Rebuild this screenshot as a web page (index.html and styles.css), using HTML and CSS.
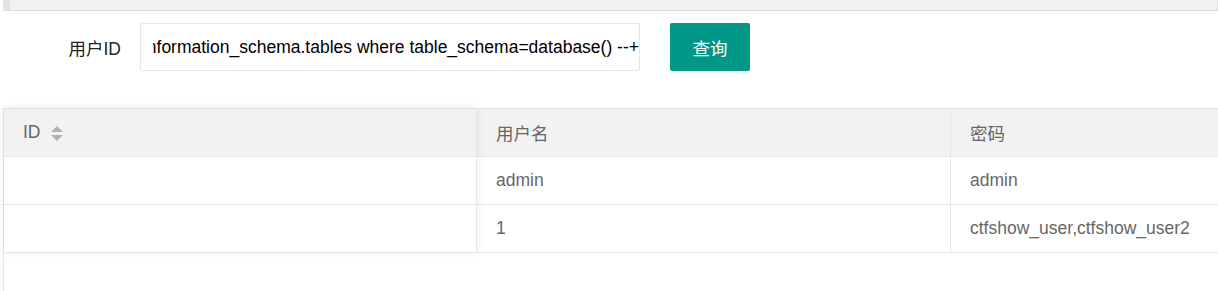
FILE: index.html
```html
<!DOCTYPE html>
<html lang="zh-CN">
<head>
<meta charset="UTF-8">
<meta name="viewport" content="width=device-width, initial-scale=1.0">
<title>ctfshow</title>
<link rel="stylesheet" href="styles.css">
</head>
<body>

<div class="page">
  <div class="quote"></div>

  <form class="search">
    <label class="search-label">用户ID</label>
    <div class="search-input">
      <div class="search-value"><span>1' union select 1,group_concat(table_name) from information_schema.tables where table_schema=database() --+</span></div>
    </div>
    <button type="button" class="search-button">查询</button>
  </form>

  <div class="table-view">
    <table class="table">
      <thead>
        <tr>
          <th class="col-id"></th>
          <th class="col-name">用户名</th>
          <th class="col-pass">密码</th>
        </tr>
      </thead>
      <tbody>
        <tr>
          <td></td>
          <td>admin</td>
          <td>admin</td>
        </tr>
        <tr>
          <td></td>
          <td>1</td>
          <td>ctfshow_user,ctfshow_user2</td>
        </tr>
      </tbody>
    </table>

    <!-- fixed left column, drawn over the main table -->
    <div class="table-fixed">
      <table class="table">
        <thead>
          <tr><th class="col-id"><span>ID</span><span class="sort"></span></th></tr>
        </thead>
        <tbody>
          <tr><td></td></tr>
          <tr><td></td></tr>
        </tbody>
      </table>
    </div>
  </div>
</div>

</body>
</html>
```

FILE: styles.css
```css
body {
  margin: 0;
  overflow: hidden;
  font-family: "Liberation Sans", "Noto Sans CJK SC", sans-serif;
  font-size: 17.5px;
}

.page {
  padding-left: 3px;
}

.quote {
  height: 10px;
  background-color: #f2f2f2;
  border-left: 7px solid #e2e2e2;
  border-right: 1px solid #e2e2e2;
  border-bottom: 1px solid #dcdcdc;
}

.search {
  display: flex;
  align-items: center;
  margin: 12px 0 0;
  height: 48px;
}

.search-label {
  width: 137px;
  box-sizing: border-box;
  padding-right: 19px;
  text-align: right;
  color: #222;
}

.search-input {
  display: flex;
  width: 500px;
  height: 48px;
  box-sizing: border-box;
  padding-left: 12px;
  border: 1px solid #e6e6e6;
  border-radius: 2px;
}

.search-value {
  flex: 1;
  display: flex;
  justify-content: flex-end;
  align-items: center;
  overflow: hidden;
  white-space: nowrap;
  color: #000;
}

.search-button {
  margin-left: 30px;
  width: 80px;
  height: 48px;
  border: none;
  border-radius: 2px;
  background-color: #009688;
  color: #fff;
  font-family: inherit;
  font-size: 17.5px;
  cursor: pointer;
}

.table-view {
  position: relative;
  margin-top: 37px;
  width: 1500px;
  height: 220px;
  border: 1px solid #e6e6e6;
  border-right: none;
}

.table {
  border-collapse: separate;
  border-spacing: 0;
  table-layout: fixed;
  color: #666;
}

.table th,
.table td {
  height: 47px;
  padding: 0 19px;
  box-sizing: content-box;
  text-align: left;
  font-weight: normal;
  border-right: 1px solid #e6e6e6;
  border-bottom: 1px solid #e6e6e6;
  white-space: nowrap;
}

.table th {
  background-color: #f2f2f2;
}

.table .col-id {
  width: 434px;
}

.table .col-name,
.table .col-pass {
  width: 435px;
}

.table-fixed {
  position: absolute;
  left: 0;
  top: 0;
  background-color: #fff;
  box-shadow: 0 -1px 8px rgba(0, 0, 0, 0.08);
}

.table-fixed th {
  display: flex;
  align-items: center;
  gap: 10px;
}

.sort {
  display: flex;
  flex-direction: column;
  gap: 3px;
  margin-top: 2px;
}

.sort::before,
.sort::after {
  content: "";
  width: 0;
  height: 0;
  border: 6px solid transparent;
}

.sort::before {
  border-top: none;
  border-bottom-color: #b2b2b2;
}

.sort::after {
  border-bottom: none;
  border-top-color: #b2b2b2;
}
```
